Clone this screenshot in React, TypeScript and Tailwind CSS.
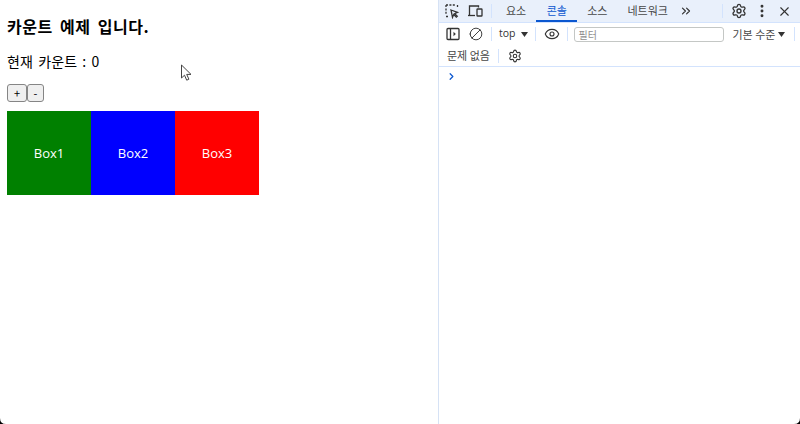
import React from 'react';
import { Settings, MoreVertical, X, ChevronsRight, ChevronRight, Ban, Eye } from 'lucide-react';

const KR = "font-['Noto_Sans_CJK_KR','Noto_Sans',sans-serif]";

const Box = ({ color, label }: { color: string; label: string }) => (
  <div className={`w-[84px] h-[84px] pt-[1px] flex items-center justify-center text-white text-[13px] font-['Open_Sans',sans-serif] ${color}`}>
    {label}
  </div>
);

const InspectIcon = () => (
  <svg width="16" height="16" viewBox="0 0 16 16" fill="none" stroke="#333" strokeWidth="1.3">
    <path d="M2 2h9M2 2v9M2 13.5h3M13.5 2v3" strokeDasharray="2 1.4" />
    <path d="M7 7l6.5 2.4-2.8 1.2 2.6 2.6-1 1-2.6-2.6-1.2 2.8z" fill="none" />
  </svg>
);

const DeviceIcon = () => (
  <svg width="16" height="16" viewBox="0 0 16 16" fill="none" stroke="#333" strokeWidth="1.3">
    <path d="M2.5 12V3h9v1.5" />
    <path d="M1 12.5h7" />
    <rect x="10" y="6" width="5" height="7" rx="0.6" />
  </svg>
);

const SidebarIcon = () => (
  <svg width="14" height="14" viewBox="0 0 14 14" fill="none" stroke="#333" strokeWidth="1.3">
    <rect x="1" y="1.5" width="12" height="11" rx="1" />
    <path d="M4.5 1.5v11" />
    <path d="M7.5 4.8L9.8 7 7.5 9.2z" fill="#333" stroke="none" />
  </svg>
);

const Triangle = () => (
  <svg width="7" height="5" viewBox="0 0 7 5"><path d="M0 0h7L3.5 5z" fill="#333" /></svg>
);

const Cursor = () => (
  <svg className="absolute left-[180px] top-[64px]" width="13" height="18" viewBox="0 0 13 18" fill="#fff" stroke="#444" strokeWidth="1">
    <path d="M1.5 1v13l3-2.8 2.2 5 2.2-1-2.2-4.8h4.3z" />
  </svg>
);

const Tab = ({ label, active }: { label: string; active?: boolean }) => (
  <div className={`h-full flex items-center justify-center px-[10px] text-[11px] whitespace-nowrap border-b-2 ${active ? 'w-[41px] text-[#0b57d0] border-[#0b57d0]' : 'text-[#474747] border-transparent'}`}>
    {label}
  </div>
);

const Sep = ({ className }: { className: string }) => <div className={`w-px h-[14px] bg-[#d3e3fd] ${className}`} />;

export default function App() {
  return (
    <div className={`relative w-[800px] h-[424px] flex overflow-hidden bg-white ${KR}`}>
      <div className="w-[438px] shrink-0 px-[7px] pt-[14px]">
        <h3 className="text-[16px] leading-[24px] font-bold text-black tracking-[0.55px] [word-spacing:3px]">카운트 예제 입니다.</h3>
        <p className="mt-[12px] text-[14px] leading-[22px] text-black tracking-[0.1px] [word-spacing:2px]">현재 카운트 : 0</p>
        <div className="mt-[12px] flex">
          <button className="w-[20px] h-[18px] flex items-center justify-center bg-[#efefef] border border-[#858585] rounded-[3px] text-[11px] text-black">+</button>
          <button className="w-[17px] h-[18px] flex items-center justify-center bg-[#efefef] border border-[#858585] rounded-[3px] text-[11px] text-black">-</button>
        </div>
        <div className="mt-[9px] flex">
          <Box color="bg-[#008000]" label="Box1" />
          <Box color="bg-[#0000ff]" label="Box2" />
          <Box color="bg-[#ff0000]" label="Box3" />
        </div>
      </div>

      <div className="flex-1 flex flex-col border-l border-[#d6e2f5]">
        <div className="h-[23px] shrink-0 flex items-center bg-[#e9f0fb] border-b border-[#d3e3fd] text-[#333]">
          <div className="ml-[5px] flex items-center gap-[7px]">
            <InspectIcon />
            <DeviceIcon />
          </div>
          <Sep className="ml-[8px] mr-[4px]" />
          <Tab label="요소" />
          <Tab label="콘솔" active />
          <Tab label="소스" />
          <Tab label="네트워크" />
          <ChevronsRight size={14} strokeWidth={2} className="ml-[1px]" />
          <Sep className="ml-[29px] mr-[8px]" />
          <Settings size={16} strokeWidth={2} />
          <MoreVertical size={16} strokeWidth={2.4} className="ml-[7px]" />
          <X size={15} strokeWidth={1.8} className="ml-[7px]" />
        </div>
        <div className="h-[22px] shrink-0 flex items-center text-[#333]">
          <div className="ml-[7px]"><SidebarIcon /></div>
          <Ban size={14} strokeWidth={1.6} className="ml-[9px] -scale-x-100" />
          <Sep className="ml-[8px]" />
          <span className="ml-[7px] text-[10.5px] font-['Open_Sans',sans-serif]">top</span>
          <div className="ml-[6px]"><Triangle /></div>
          <Sep className="ml-[7px]" />
          <Eye size={16} strokeWidth={1.7} className="ml-[8px]" />
          <Sep className="ml-[7px]" />
          <div className="ml-[6px] w-[150px] h-[15px] flex items-center px-[3px] border border-[#c4c7c5] rounded-[3px] text-[10px] text-[#8f8f8f]">필터</div>
          <span className="ml-[8px] text-[11px] text-[#474747]">기본 수준</span>
          <div className="ml-[3px]"><Triangle /></div>
          <Sep className="ml-[9px]" />
        </div>
        <div className="h-[22px] shrink-0 flex items-center border-b border-[#d3e3fd] text-[#474747]">
          <span className="ml-[8px] text-[11px]">문제 없음</span>
          <Sep className="ml-[8px]" />
          <Settings size={14} strokeWidth={1.9} className="ml-[9px] text-[#333]" />
        </div>
        <div className="h-[18px] flex items-center">
          <ChevronRight size={11} strokeWidth={2.6} className="ml-[7px] text-[#0b57d0]" />
        </div>
      </div>

      <Cursor />
      <svg className="absolute left-0 bottom-0" width="6" height="6" viewBox="0 0 6 6"><path d="M0 0v6h6Q0 6 0 0z" fill="#000" /></svg>
      <svg className="absolute right-0 bottom-0" width="6" height="6" viewBox="0 0 6 6"><path d="M6 0v6H0Q6 6 6 0z" fill="#000" /></svg>
    </div>
  );
}
